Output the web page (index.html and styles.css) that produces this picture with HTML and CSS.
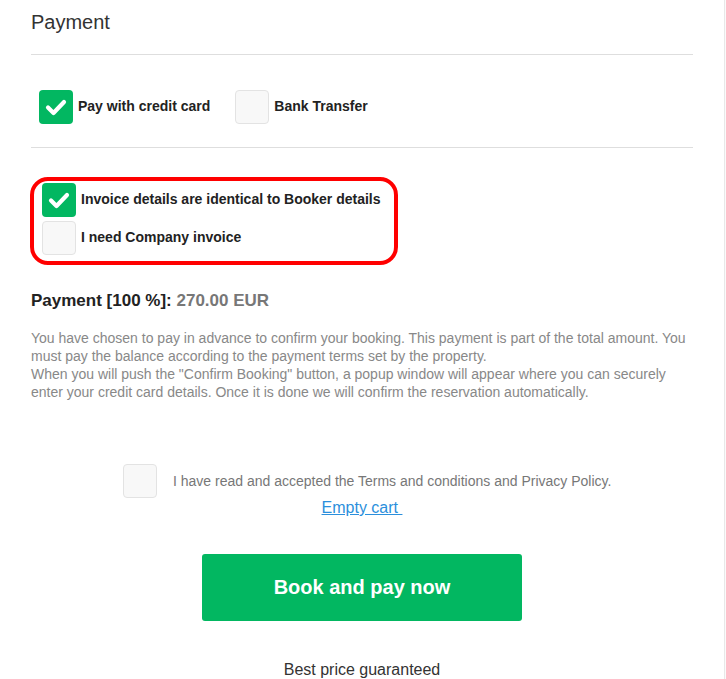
FILE: index.html
```html
<!DOCTYPE html>
<html lang="en">
<head>
  <meta charset="UTF-8">
  <meta name="viewport" content="width=device-width, initial-scale=1.0">
  <title>Payment</title>
  <link rel="stylesheet" href="styles.css">
</head>
<body>
  <div class="page">
    <h1 class="title">Payment</h1>
    <hr class="divider">

    <div class="methods">
      <label class="method">
        <span class="box checked">
          <svg viewBox="0 0 34 34" width="34" height="34"><path d="M9 17.5l5.5 5.5L25 12" fill="none" stroke="#fff" stroke-width="4.2" stroke-linecap="round" stroke-linejoin="round"/></svg>
        </span>
        <span class="method-label">Pay with credit card</span>
      </label>
      <label class="method">
        <span class="box"></span>
        <span class="method-label">Bank Transfer</span>
      </label>
    </div>

    <hr class="divider">

    <div class="invoice">
      <label class="invoice-row">
        <span class="box checked">
          <svg viewBox="0 0 34 34" width="34" height="34"><path d="M9 17.5l5.5 5.5L25 12" fill="none" stroke="#fff" stroke-width="4.2" stroke-linecap="round" stroke-linejoin="round"/></svg>
        </span>
        <span class="invoice-label">Invoice details are identical to Booker details</span>
      </label>
      <label class="invoice-row">
        <span class="box"></span>
        <span class="invoice-label">I need Company invoice</span>
      </label>
    </div>

    <div class="amount">Payment [100 %]: <span class="amount-value">270.00 EUR</span></div>

    <p class="note">You have chosen to pay in advance to confirm your booking. This payment is part of the total amount. You must pay the balance according to the payment terms set by the property.<br>When you will push the "Confirm Booking" button, a popup window will appear where you can securely enter your credit card details. Once it is done we will confirm the reservation automatically.</p>

    <div class="terms">
      <span class="box"></span>
      <span class="terms-text">I have read and accepted the Terms and conditions and Privacy Policy.</span>
    </div>
    <div class="cart"><a href="#" class="cart-link">Empty cart&nbsp;</a></div>

    <div class="actions">
      <button class="book-btn">Book and pay now</button>
    </div>
    <div class="guarantee">Best price guaranteed</div>
  </div>
</body>
</html>
```

FILE: styles.css
```css
html {
  background-color: #fafafa;
}
body {
  margin: 0;
  font-family: "Liberation Sans", Arial, sans-serif;
  color: #222;
}
.page {
  width: 662px;
  height: 679px;
  overflow: hidden;
  padding: 0 31px;
  background-color: #fff;
  border-right: 1px solid #e8e8e8;
}
.title {
  margin: 0;
  padding-top: 10px;
  font-size: 20px;
  line-height: 24px;
  font-weight: normal;
  color: #333;
}
.divider {
  margin: 20px 0 0;
  border: none;
  border-top: 1px solid #dedede;
}
.methods {
  display: flex;
  gap: 25px;
  padding: 35px 8px 3px;
}
.method {
  display: flex;
  align-items: center;
  gap: 5px;
}
.method-label,
.invoice-label {
  font-size: 14px;
  font-weight: bold;
  color: #222;
  margin-top: -3px;
}
.box {
  display: block;
  width: 32px;
  height: 32px;
  border: 1px solid #e3e3e3;
  border-radius: 4px;
  background-color: #f8f8f8;
}
.box.checked {
  width: 34px;
  height: 34px;
  border: none;
  background-color: #02b761;
}
.box svg {
  display: block;
}
.invoice {
  width: 344px;
  margin: 29px 0 0 -1px;
  padding: 2px 8px 6px;
  border: 4px solid #f00;
  border-radius: 18px;
  display: flex;
  flex-direction: column;
  gap: 4px;
}
.invoice-row {
  display: flex;
  align-items: center;
  gap: 5px;
}
.amount {
  margin-top: 26px;
  font-size: 17px;
  line-height: 20px;
  font-weight: bold;
  color: #222;
}
.amount-value {
  color: #777;
}
.note {
  margin: 18px 0 0;
  font-size: 14px;
  line-height: 18px;
  color: #888;
}
.terms {
  display: flex;
  align-items: center;
  gap: 16px;
  margin-top: 63px;
  padding-left: 92px;
}
.terms-text {
  font-size: 14px;
  color: #777;
}
.cart {
  margin-top: 1px;
  text-align: center;
}
.cart-link {
  font-size: 16px;
  color: #2b8fdc;
  text-decoration: underline;
}
.actions {
  display: flex;
  justify-content: center;
  margin-top: 37px;
}
.book-btn {
  width: 320px;
  height: 67px;
  border: none;
  border-radius: 3px;
  background-color: #02b761;
  color: #fff;
  font-family: "Liberation Sans", Arial, sans-serif;
  font-size: 20px;
  font-weight: bold;
  cursor: pointer;
}
.guarantee {
  margin-top: 40px;
  text-align: center;
  font-size: 16px;
  color: #333;
}
```
